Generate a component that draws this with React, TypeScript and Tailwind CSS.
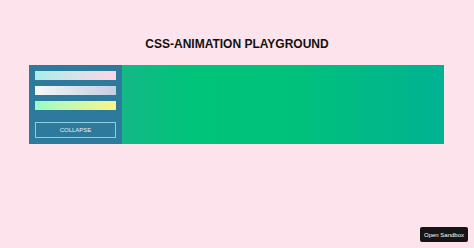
import React from 'react';

const App = () => {
  return (
    <div className="min-h-screen w-full bg-[#fde4ec] font-['Liberation_Sans',Arial,sans-serif] relative">
      {/* Title */}
      <h1 className="pt-[37px] text-center text-[12px] leading-[14px] font-bold text-[#111]">
        CSS-ANIMATION PLAYGROUND
      </h1>

      {/* Playground */}
      <div className="mt-[14px] ml-[29px] w-[415px] h-[79px] flex">
        <div className="w-[93px] bg-[#2e7a9c] flex flex-col px-[6px] pt-[6px]">
          <div className="h-[9px] bg-gradient-to-r from-[#a8edea] to-[#fed6e3]" />
          <div className="mt-[6px] h-[9px] bg-gradient-to-r from-[#f5f7fa] to-[#c3cfe2]" />
          <div className="mt-[6px] h-[9px] bg-gradient-to-r from-[#96fbc4] to-[#f9f586]" />
          <button className="mt-[12px] h-[16px] border border-[#8ccde0] text-[#e6f1f6] text-[6px] leading-none flex items-center justify-center">
            COLLAPSE
          </button>
        </div>
        <div className="flex-1 bg-[linear-gradient(to_right,#14b886,#00c47a_22%,#00c27a_50%,#00b292)]" />
      </div>

      {/* Open Sandbox */}
      <button className="absolute right-[6px] bottom-[6px] h-[15px] px-[4px] bg-[#151515] rounded-[2px] text-white text-[6px] leading-none flex items-center">
        Open Sandbox
      </button>
    </div>
  );
};

export default App;
